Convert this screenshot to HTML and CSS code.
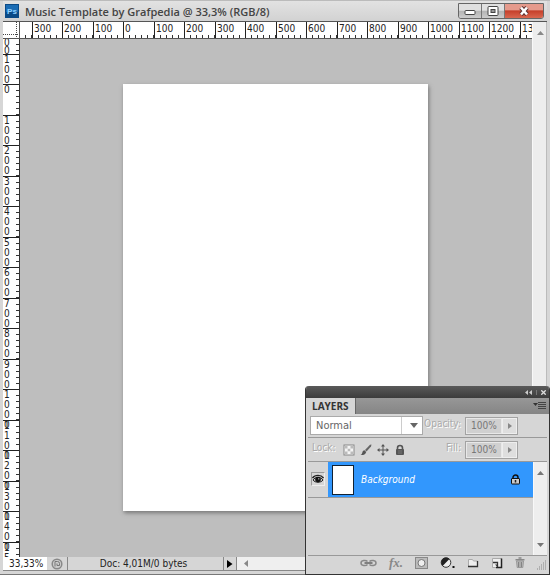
FILE: index.html
```html
<!DOCTYPE html>
<html lang="en">
<head>
    <meta charset="UTF-8">
    <meta name="viewport" content="width=device-width, initial-scale=1.0">
    <title>Music Template by Grafpedia</title>
    <link rel="stylesheet" href="styles.css">
</head>
<body>
    <main class="window">
        <header class="titlebar">
            <svg class="app-icon" viewBox="0 0 14 14">
                <rect width="14" height="14" fill="#0b4a86"/>
                <rect x="1" y="1" width="12" height="7" fill="#1a6cb4"/>
                <text x="7" y="10" text-anchor="middle" class="app-icon-text">Ps</text>
            </svg>
            <h1 class="title">Music Template by Grafpedia @ 33,3% (RGB/8)</h1>
            <div class="window-buttons">
                <button class="win-btn" aria-label="Minimize">
                    <svg width="12" height="10" viewBox="0 0 12 10"><rect x="1" y="4.500" width="10" height="4" rx="1" fill="#fff" stroke="#444"/></svg>
                </button>
                <button class="win-btn" aria-label="Maximize">
                    <svg width="12" height="10" viewBox="0 0 12 10"><rect x="1" y=".5" width="10" height="9" rx="1" fill="#fff" stroke="#444"/><rect x="4" y="3.500" width="4" height="3" fill="#999" stroke="#444"/></svg>
                </button>
                <button class="win-btn win-close" aria-label="Close">
                    <svg width="12" height="10" viewBox="0 0 12 10"><path d="M3 1.500l6 7M9 1.500l-6 7" stroke="#5b3030" stroke-width="4.500"/><path d="M3 1.500l6 7M9 1.500l-6 7" stroke="#fff" stroke-width="2.600"/></svg>
                </button>
            </div>
        </header>

        <div class="editor">
            <div class="ruler-corner">
                <svg width="16" height="16" viewBox="0 0 16 16"><path d="M13.500 0v16M0 12.500h16" stroke="#444" stroke-dasharray="1 1"/></svg>
            </div>
            <div class="ruler ruler-h">
                <span class="lead"></span>
                <span>300</span><span>200</span><span>100</span><span>0</span>
                <span>100</span><span>200</span><span>300</span><span>400</span>
                <span>500</span><span>600</span><span>700</span><span>800</span>
                <span>900</span><span>1000</span><span>1100</span><span>1200</span>
                <span>1300</span>
            </div>
            <div class="scroll-v">
                <svg width="7" height="4" viewBox="0 0 7 4"><path d="M0 4L3.500 0 7 4z" fill="#888"/></svg>
            </div>
            <div class="ruler ruler-v">
                <span class="lead">00</span>
                <span>100</span><span>0</span><span>100</span><span>200</span>
                <span>300</span><span>400</span><span>500</span><span>600</span>
                <span>700</span><span>800</span><span>900</span><span>1000</span>
                <span>1100</span><span>1200</span><span>1300</span><span>1400</span>
                <span>1500</span>
            </div>
            <div class="workspace">
                <div class="canvas"></div>
            </div>
        </div>

        <footer class="statusbar">
            <input class="zoom" type="text" value="33,33%" aria-label="Zoom">
            <button class="status-icon" aria-label="Version info">
                <svg width="12" height="12" viewBox="0 0 12 12"><circle cx="6" cy="6" r="4.800" fill="#ccc" stroke="#888" stroke-width="1.500"/><path d="M4 8.500V3.500h2.500a2 2 0 0 1 2 2V7.500H6V5.500" fill="none" stroke="#777"/></svg>
            </button>
            <span class="doc-info">Doc: 4,01M/0 bytes</span>
            <button class="status-more" aria-label="Status options">
                <svg width="6" height="8" viewBox="0 0 6 8"><path d="M0 0l5.500 4L0 8z" fill="#000"/></svg>
            </button>
            <div class="scroll-h">
                <svg width="4" height="7" viewBox="0 0 4 7"><path d="M4 0L0 3.500 4 7z" fill="#888"/></svg>
            </div>
        </footer>
    </main>

    <aside class="panel">
        <div class="panel-top">
            <button class="plain" aria-label="Collapse panel">
                <svg width="7" height="5" viewBox="0 0 7 5"><path d="M3 0v5L0 2.500zM7 0v5L4 2.500z" fill="#ccc"/></svg>
            </button>
            <span class="panel-sep"></span>
            <button class="plain" aria-label="Close panel">
                <svg width="5" height="5" viewBox="0 0 5 5"><path d="M.3.3l4.400 4.400M4.700.3L.3 4.700" stroke="#ddd" stroke-width="1.300"/></svg>
            </button>
        </div>
        <div class="tabs">
            <h2 class="tab">LAYERS</h2>
            <button class="plain panel-menu" aria-label="Panel menu">
                <svg width="13" height="8" viewBox="0 0 13 8"><path d="M0 1h5L2.500 4z" fill="#333"/><path d="M5 .5h8M5 2.500h8M5 4.500h8M5 6.500h8" stroke="#444"/></svg>
            </button>
        </div>

        <div class="row">
            <div class="select-wrap">
                <select class="blend" aria-label="Blend mode">
                    <option>Normal</option>
                </select>
                <svg class="select-arrow" width="8" height="5" viewBox="0 0 8 5"><path d="M0 0h8L4 5z" fill="#666"/></svg>
            </div>
            <label class="dim field-label" for="opacity">Opacity:</label>
            <div class="field">
                <input id="opacity" type="text" value="100%">
                <button aria-label="Opacity slider"><svg width="4" height="6" viewBox="0 0 4 6"><path d="M0 0l4 3-4 3z" fill="#888"/></svg></button>
            </div>
        </div>

        <div class="row">
            <span class="dim lock-label">Lock:</span>
            <div class="locks">
                <button class="plain" aria-label="Lock transparent pixels">
                    <svg width="12" height="12" viewBox="0 0 12 12"><rect x="1" y="1" width="10" height="10" fill="#f4f4f4" stroke="#888"/><path d="M2 2h2.500v2.500H2zM7.500 2H10v2.500H7.500zM4.700 4.700h2.600v2.600H4.700zM2 7.500h2.500V10H2zM7.500 7.500H10V10H7.500z" fill="#bbb"/></svg>
                </button>
                <button class="plain" aria-label="Lock image pixels">
                    <svg width="12" height="12" viewBox="0 0 12 12"><path d="M11.500.5L10 .8 5 6l1.500 1.500 4.500-5z" fill="#666"/><path d="M4.500 6.200l1.700 1.700C5.500 10.500 3 11.300.5 11c1.500-.8 1.500-1.500 2-3 .3-1 1-1.800 2-1.800z" fill="#555"/></svg>
                </button>
                <button class="plain" aria-label="Lock position">
                    <svg width="12" height="12" viewBox="0 0 12 12"><path d="M6 1v10M1 6h10" stroke="#555"/><path d="M6 0l2 2.500H4zM6 12l2-2.500H4zM0 6l2.500-2v4zM12 6L9.500 4v4z" fill="#555"/></svg>
                </button>
                <button class="plain" aria-label="Lock all">
                    <svg width="12" height="12" viewBox="0 0 12 12"><path d="M3.500 6V4a2.500 2.500 0 0 1 5 0v2" fill="none" stroke="#555" stroke-width="1.600"/><rect x="2" y="5" width="8" height="6" rx="1" fill="#555"/><path d="M4 7h4M4 9h4" stroke="#777"/></svg>
                </button>
            </div>
            <label class="dim field-label" for="fill">Fill:</label>
            <div class="field">
                <input id="fill" type="text" value="100%">
                <button aria-label="Fill slider"><svg width="4" height="6" viewBox="0 0 4 6"><path d="M0 0l4 3-4 3z" fill="#888"/></svg></button>
            </div>
        </div>

        <div class="layers">
            <div class="layer-list">
                <div class="layer">
                    <button class="eye" aria-label="Layer visibility">
                        <svg width="12" height="10" viewBox="0 0 12 10"><path d="M1 6c2-3.500 8-3.500 10 0-2 3-8 3-10 0z" fill="#ccc" stroke="#222"/><circle cx="6" cy="5.500" r="2.800" fill="#111"/><path d="M.5 4C3 .5 9 .5 11.500 4" fill="none" stroke="#222" stroke-width="1.400"/><circle cx="6.800" cy="4.800" r=".6" fill="#fff"/></svg>
                    </button>
                    <div class="layer-main">
                        <span class="thumb"></span>
                        <span class="layer-name">Background</span>
                        <svg class="layer-lock" width="9" height="11" viewBox="0 0 9 11"><path d="M2 5V3.500a2.500 2.500 0 0 1 5 0V5" fill="none" stroke="#111" stroke-width="1.500"/><rect x=".5" y="4.500" width="8" height="5.500" rx=".5" fill="#ccc" stroke="#111"/><path d="M4.500 6v2.500" stroke="#222" stroke-width="1.500"/></svg>
                    </div>
                </div>
            </div>
            <div class="layer-scroll">
                <svg width="7" height="4" viewBox="0 0 7 4"><path d="M0 4L3.500 0 7 4z" fill="#777"/></svg>
                <svg width="7" height="4" viewBox="0 0 7 4"><path d="M0 0L3.500 4 7 0z" fill="#777"/></svg>
            </div>
        </div>

        <div class="panel-footer">
            <button class="plain" aria-label="Link layers">
                <svg width="17" height="12" viewBox="0 0 17 12"><path d="M7.500 4.500C6 2.800 1 3 1 6s5 3.200 6.500 1.500M9.500 4.500C11 2.800 16 3 16 6s-5 3.200-6.500 1.500" fill="none" stroke="#888" stroke-width="1.500"/><path d="M4.500 6h8" stroke="#777" stroke-width="1.800"/></svg>
            </button>
            <button class="plain fx" aria-label="Layer style">fx<span>.</span></button>
            <button class="plain" aria-label="Add mask">
                <svg width="13" height="12" viewBox="0 0 13 12"><rect x=".5" y=".5" width="12" height="11" fill="#bbb" stroke="#888"/><circle cx="6.500" cy="6" r="3.500" fill="#eee" stroke="#777"/></svg>
            </button>
            <button class="plain" aria-label="Adjustment layer">
                <svg width="15" height="12" viewBox="0 0 15 12"><circle cx="6" cy="5.500" r="4.800" fill="#eee" stroke="#333"/><path d="M2.600 8.900a4.800 4.800 0 0 1 6.800-6.800z" fill="#222"/><rect x="12.500" y="9" width="2" height="2" fill="#111"/></svg>
            </button>
            <button class="plain" aria-label="New group">
                <svg width="12" height="12" viewBox="0 0 12 12"><path d="M1.500 9.500V2.500h4l1 1.500h4v5.500z" fill="#eee" stroke="#aaa"/><path d="M1 9.500h9.500V4" fill="none" stroke="#333" stroke-width="1.300"/></svg>
            </button>
            <button class="plain" aria-label="New layer">
                <svg width="12" height="12" viewBox="0 0 12 12"><path d="M1.500 1.500h9v9h-9z" fill="#eee" stroke="#aaa"/><path d="M10.500 1.500v9H5" fill="none" stroke="#222" stroke-width="1.500"/><path d="M2 5.500h4.500V10" fill="none" stroke="#333" stroke-width="1.300"/><path d="M4 7.500h2.500V10z" fill="#333"/></svg>
            </button>
            <button class="plain" aria-label="Delete layer">
                <svg width="10" height="12" viewBox="0 0 10 12"><path d="M1.500 4h7l-.7 6.500H2.200z" fill="#bbb" stroke="#999"/><path d="M.5 2.700h9M3.500 1h3" stroke="#888" stroke-width="1.400"/><path d="M3.700 5v5M6.300 5v5" stroke="#777"/></svg>
            </button>
            <svg class="grip" width="10" height="10" viewBox="0 0 10 10"><path d="M8 1h1M6 3h1M8 3h1M4 5h1M6 5h1M8 5h1M2 7h1M4 7h1M6 7h1M8 7h1M0 9h1M2 9h1M4 9h1M6 9h1M8 9h1" stroke="#888" stroke-width="1.200"/></svg>
        </div>
    </aside>
</body>
</html>
```

FILE: styles.css
```css
* { box-sizing: border-box; }

body {
    margin: 0;
    font-family: "DejaVu Sans Condensed", "DejaVu Sans", sans-serif;
    font-size: 10px;
    color: #222;
    overflow: hidden;
}

button, input, select { font: inherit; color: inherit; }

svg { display: block; flex: none; }

.plain {
    display: flex;
    padding: 0;
    border: none;
    background: none;
}

/* document window */
.window {
    display: flex;
    flex-direction: column;
    height: 100vh;
    padding: 0 3px 3px;
    background-color: #d6d6d6;
    border-bottom: 1px solid #777;
    border-top: 1px solid #bbb;
}

.titlebar {
    display: flex;
    align-items: center;
    height: 20px;
    padding: 0 3px 0 2px;
    background: linear-gradient(#e2e2e2, #d2d2d2);
}

.app-icon { width: 14px; height: 14px; }

.app-icon-text {
    font: bold 8px "Liberation Sans", sans-serif;
    fill: #8fd0ff;
}

.title {
    flex: 1;
    margin: 0 0 0 6px;
    font: 600 11px "Open Sans", sans-serif;
    color: #444;
    white-space: nowrap;
}

.window-buttons {
    display: flex;
    height: 16px;
    border: 1px solid #666;
    border-radius: 0 0 3px 3px;
    overflow: hidden;
}

.win-btn {
    display: flex;
    align-items: center;
    justify-content: center;
    width: 23px;
    padding: 0;
    border: none;
    border-right: 1px solid #777;
    background: linear-gradient(#e0e0e0 45%, #b4b4b4 50%, #ccc);
}

.win-close {
    width: 38px;
    border-right: none;
    background: linear-gradient(#e59a8c 40%, #c6402b 50%, #d9674f);
}

.editor {
    flex: 1;
    display: grid;
    grid-template-columns: 17px 1fr 15px;
    grid-template-rows: 17px 1fr;
    min-height: 0;
    border-top: 1px solid #555;
}

/* rulers */
.ruler-corner {
    background-color: #fff;
    border-right: 1px solid #555;
    border-bottom: 1px solid #555;
    overflow: hidden;
}

.ruler {
    display: flex;
    background-color: #fff;
    color: #222;
    overflow: hidden;
}

.ruler span { flex: none; }

.ruler-h { border-bottom: 1px solid #555; }

.ruler-h span {
    width: 31px;
    padding-left: 1px;
    line-height: 14px;
    border-left: 1px solid #222;
    background: repeating-linear-gradient(90deg, transparent 0 5px, #333 5px 6px) bottom / 100% 3px no-repeat;
}

.ruler-h span:nth-child(even) { width: 30px; }

.ruler-h .lead { width: 12px; border-left: none; }

.ruler-v {
    grid-column: 1;
    grid-row: 2;
    flex-direction: column;
    border-right: 1px solid #333;
}

.ruler-v span {
    width: 16px;
    height: 30px;
    padding-left: 1px;
    padding-right: 8px;
    line-height: 10px;
    word-break: break-all;
    border-top: 1px solid #222;
    background: repeating-linear-gradient(transparent 0 5px, #333 5px 6px) right / 3px 100% no-repeat;
}

.ruler-v span:nth-child(odd) { height: 31px; }

.ruler-v .lead:first-child { height: 15px; border-top: none; line-height: 8px; }

.workspace {
    background-color: #bebebe;
    overflow: hidden;
}

.canvas {
    width: 305px;
    height: 427px;
    margin: 45px 0 0 103px;
    background-color: #fff;
    box-shadow: 1px 2px 4px #777;
}

.scroll-v {
    grid-column: 3;
    grid-row: 1 / 3;
    padding: 9px 0 0 4px;
    background-color: #ededed;
    border-left: 1px solid #f8f8f8;
    border-right: 1px solid #bbb;
}

/* status bar */
.statusbar {
    display: flex;
    height: 14px;
    border-bottom: 1px solid #888;
}

.zoom {
    width: 44px;
    padding: 0 0 0 6px;
    border: none;
    background-color: #fff;
}

.status-icon, .status-more {
    display: flex;
    align-items: center;
    justify-content: center;
    padding: 0;
    border: none;
    border-right: 1px solid #888;
    background: none;
}

.status-icon { width: 21px; }

.status-more { width: 13px; }

.doc-info {
    width: 156px;
    line-height: 14px;
    text-align: center;
    padding-right: 4px;
    border-right: 1px solid #888;
}

.scroll-h {
    flex: 1;
    padding: 3px 0 0 7px;
    background-color: #efefef;
}

/* layers panel */
.panel {
    position: absolute;
    right: 0;
    bottom: 0;
    width: 245px;
    background-color: #d6d6d6;
    border: 1px solid #333;
    border-width: 0 1px 1px;
    border-radius: 4px 4px 0 0;
    overflow: hidden;
}

.panel-top {
    display: flex;
    align-items: center;
    justify-content: flex-end;
    gap: 4px;
    height: 12px;
    padding-right: 3px;
    background: linear-gradient(#5a5a5a, #3c3c3c);
}

.panel-sep {
    width: 1px;
    height: 5px;
    background-color: #777;
}

.tabs {
    display: flex;
    justify-content: space-between;
    align-items: center;
    height: 16px;
    padding-right: 3px;
    background: linear-gradient(#979797, #858585);
}

.tab {
    width: 50px;
    height: 16px;
    margin: 0;
    padding-left: 6px;
    font: bold 10px/16px "Open Sans", sans-serif;
    color: #333;
    background-color: #d6d6d6;
    border-right: 1px solid #666;
}

.row {
    display: flex;
    align-items: center;
    height: 24px;
    margin: 0 2px;
    padding-right: 29px;
    border-bottom: 1px solid #999;
}

.select-wrap {
    position: relative;
    display: flex;
    width: 115px;
    padding-left: 2px;
}

.blend {
    appearance: none;
    width: 100%;
    height: 19px;
    padding: 0 5px;
    border: 1px solid #aaa;
    border-radius: 0;
    font-size: 11px;
    color: #666;
    background: linear-gradient(90deg, #fff 90px, #ccc 90px 91px, #fff 91px);
}

.select-arrow {
    position: absolute;
    right: 5px;
    top: 7px;
    pointer-events: none;
}

.dim {
    color: #aaa;
    text-shadow: 1px 1px 0 #fff;
}

.field-label {
    flex: 1;
    padding: 0 4px 4px 0;
    text-align: right;
}

.field {
    display: flex;
    height: 18px;
    border: 1px solid #a2a2a2;
}

.field input {
    width: 36px;
    padding: 0 0 0 4px;
    border: 1px solid #e8e8e8;
    color: #777;
    background-color: #d0d0d0;
}

.field button {
    display: flex;
    align-items: center;
    justify-content: center;
    width: 15px;
    padding: 0;
    border: 1px solid #eee;
    background-color: #dedede;
}

.lock-label { padding: 0 0 4px 4px; }

.locks {
    display: flex;
    gap: 5px;
    padding-left: 7px;
}

.layers {
    display: flex;
    height: 94px;
    margin: 0 2px;
    border-bottom: 1px solid #999;
}

.layer-list { flex: 1; }

.layer {
    display: flex;
    height: 36px;
    border-bottom: 1px solid #999;
}

.eye {
    display: flex;
    align-items: center;
    justify-content: center;
    width: 14px;
    height: 14px;
    margin: 10px 3px;
    padding: 0;
    border: 1px solid #aaa;
    border-color: #999 #eee #eee #999;
    background: none;
}

.layer-main {
    flex: 1;
    display: flex;
    align-items: center;
    padding: 0 13px 0 4px;
    background-color: #3297fd;
}

.thumb {
    width: 22px;
    height: 30px;
    border: 1px solid #123;
    background-color: #fff;
}

.layer-name {
    flex: 1;
    padding-left: 7px;
    font-style: italic;
    color: #fff;
}

.layer-scroll {
    display: flex;
    flex-direction: column;
    justify-content: space-between;
    align-items: center;
    width: 14px;
    padding: 9px 0 8px;
    background-color: #eee;
    border-left: 1px solid #f8f8f8;
}

.panel-footer {
    display: flex;
    align-items: center;
    justify-content: flex-end;
    gap: 12px;
    height: 18px;
    padding: 0 2px 4px;
}

.fx {
    font: italic bold 13px/12px "Liberation Serif", serif;
    color: #888;
}

.grip { align-self: flex-end; }
```
